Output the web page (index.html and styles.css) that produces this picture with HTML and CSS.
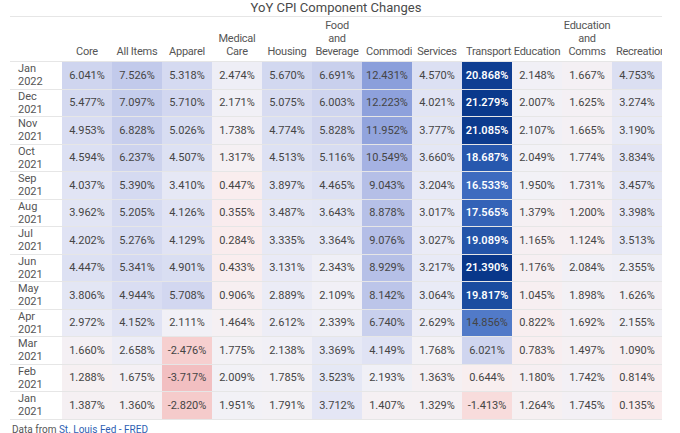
FILE: index.html
```html
<!DOCTYPE html>
<html lang="en">
<head>
<meta charset="utf-8">
<title>YoY CPI Component Changes</title>
<link rel="stylesheet" href="styles.css">
</head>
<body>
<div class="chart">
  <div class="title">YoY CPI Component Changes</div>
  <table class="grid">
    <colgroup>
      <col class="c-label">
      <col span="12" class="c-val">
    </colgroup>
    <thead>
      <tr>
        <th class="corner"></th>
        <th>Core</th>
        <th>All Items</th>
        <th>Apparel</th>
        <th>Medical<br>Care</th>
        <th>Housing</th>
        <th>Food<br>and<br>Beverage</th>
        <th class="clip">Commodities</th>
        <th>Services</th>
        <th class="clip">Transportation</th>
        <th>Education</th>
        <th>Education<br>and<br>Comms</th>
        <th class="clip">Recreation</th>
      </tr>
    </thead>
    <tbody>
      <tr><th class="lbl">Jan<br>2022</th><td>6.041%</td><td>7.526%</td><td>5.318%</td><td>2.474%</td><td>5.670%</td><td>6.691%</td><td>12.431%</td><td>4.570%</td><td>20.868%</td><td>2.148%</td><td>1.667%</td><td>4.753%</td></tr>
      <tr><th class="lbl">Dec<br>2021</th><td>5.477%</td><td>7.097%</td><td>5.710%</td><td>2.171%</td><td>5.075%</td><td>6.003%</td><td>12.223%</td><td>4.021%</td><td>21.279%</td><td>2.007%</td><td>1.625%</td><td>3.274%</td></tr>
      <tr><th class="lbl">Nov<br>2021</th><td>4.953%</td><td>6.828%</td><td>5.026%</td><td>1.738%</td><td>4.774%</td><td>5.828%</td><td>11.952%</td><td>3.777%</td><td>21.085%</td><td>2.107%</td><td>1.665%</td><td>3.190%</td></tr>
      <tr><th class="lbl">Oct<br>2021</th><td>4.594%</td><td>6.237%</td><td>4.507%</td><td>1.317%</td><td>4.513%</td><td>5.116%</td><td>10.549%</td><td>3.660%</td><td>18.687%</td><td>2.049%</td><td>1.774%</td><td>3.834%</td></tr>
      <tr><th class="lbl">Sep<br>2021</th><td>4.037%</td><td>5.390%</td><td>3.410%</td><td>0.447%</td><td>3.897%</td><td>4.465%</td><td>9.043%</td><td>3.204%</td><td>16.533%</td><td>1.950%</td><td>1.731%</td><td>3.457%</td></tr>
      <tr><th class="lbl">Aug<br>2021</th><td>3.962%</td><td>5.205%</td><td>4.126%</td><td>0.355%</td><td>3.487%</td><td>3.643%</td><td>8.878%</td><td>3.017%</td><td>17.565%</td><td>1.379%</td><td>1.200%</td><td>3.398%</td></tr>
      <tr><th class="lbl">Jul<br>2021</th><td>4.202%</td><td>5.276%</td><td>4.129%</td><td>0.284%</td><td>3.335%</td><td>3.364%</td><td>9.076%</td><td>3.027%</td><td>19.089%</td><td>1.165%</td><td>1.124%</td><td>3.513%</td></tr>
      <tr><th class="lbl">Jun<br>2021</th><td>4.447%</td><td>5.341%</td><td>4.901%</td><td>0.433%</td><td>3.131%</td><td>2.343%</td><td>8.929%</td><td>3.217%</td><td>21.390%</td><td>1.176%</td><td>2.084%</td><td>2.355%</td></tr>
      <tr><th class="lbl">May<br>2021</th><td>3.806%</td><td>4.944%</td><td>5.708%</td><td>0.906%</td><td>2.889%</td><td>2.109%</td><td>8.142%</td><td>3.064%</td><td>19.817%</td><td>1.045%</td><td>1.898%</td><td>1.626%</td></tr>
      <tr><th class="lbl">Apr<br>2021</th><td>2.972%</td><td>4.152%</td><td>2.111%</td><td>1.464%</td><td>2.612%</td><td>2.339%</td><td>6.740%</td><td>2.629%</td><td>14.856%</td><td>0.822%</td><td>1.692%</td><td>2.155%</td></tr>
      <tr><th class="lbl">Mar<br>2021</th><td>1.660%</td><td>2.658%</td><td>-2.476%</td><td>1.775%</td><td>2.138%</td><td>3.369%</td><td>4.149%</td><td>1.768%</td><td>6.021%</td><td>0.783%</td><td>1.497%</td><td>1.090%</td></tr>
      <tr><th class="lbl">Feb<br>2021</th><td>1.288%</td><td>1.675%</td><td>-3.717%</td><td>2.009%</td><td>1.785%</td><td>3.523%</td><td>2.193%</td><td>1.363%</td><td>0.644%</td><td>1.180%</td><td>1.742%</td><td>0.814%</td></tr>
      <tr><th class="lbl">Jan<br>2021</th><td>1.387%</td><td>1.360%</td><td>-2.820%</td><td>1.951%</td><td>1.791%</td><td>3.712%</td><td>1.407%</td><td>1.329%</td><td>-1.413%</td><td>1.264%</td><td>1.745%</td><td>0.135%</td></tr>
    </tbody>
  </table>
  <div class="source">Data from <a href="#">St. Louis Fed - FRED</a></div>
</div>
<script src="script.js"></script>
</body>
</html>
```

FILE: styles.css
```css
html, body {
  margin: 0;
  padding: 0;
  background: #ffffff;
}

body {
  font-family: Roboto, "Liberation Sans", Arial, sans-serif;
  color: #444444;
}

.chart {
  width: 652px;
  margin-left: 10px;
}

.title {
  height: 16px;
  line-height: 16px;
  font-size: 13px;
  color: #4a4a4a;
  text-align: center;
  border-bottom: 1px solid #e6e6e6;
  white-space: nowrap;
}

.grid {
  width: 652px;
  table-layout: fixed;
  border-collapse: separate;
  border-spacing: 0;
  font-size: 11px;
}

.c-label {
  width: 52px;
}

.c-val {
  width: 50px;
}

.grid thead tr {
  height: 45px;
}

.grid thead th {
  padding: 0 0 3px;
  line-height: 13px;
  font-weight: normal;
  letter-spacing: -0.25px;
  color: #555555;
  text-align: center;
  vertical-align: bottom;
  white-space: nowrap;
  overflow: hidden;
  border-bottom: 1px solid #e6e6e6;
}

.grid thead th.clip {
  text-align: left;
  padding-left: 4px;
}

.grid tbody tr {
  height: 27.5px;
}

.grid tbody th.lbl {
  padding: 0 0 0 8px;
  font-weight: normal;
  text-align: left;
  vertical-align: middle;
  line-height: 13px;
  color: #555555;
  border-bottom: 1px solid #e6e6e6;
}

.grid td {
  padding: 0;
  text-align: center;
  vertical-align: middle;
  line-height: 13px;
  white-space: nowrap;
  color: #454545;
  background-color: #f2f1f6;
  border-bottom: 1px solid #e6e6e6;
}

.grid td.dark {
  color: #ffffff;
  font-weight: 600;
}

.source {
  margin-top: 3px;
  padding-left: 2px;
  font-size: 10px;
  line-height: 13px;
  color: #555555;
  white-space: nowrap;
}

.source a {
  color: #2f5fb3;
  text-decoration: underline;
}
```

FILE: script.js
```js
(function () {
  var stops = [
    [-3.8, [242, 190, 192]],
    [-2.8, [245, 203, 203]],
    [-1.4, [248, 220, 220]],
    [0.0, [250, 235, 236]],
    [1.0, [247, 239, 241]],
    [2.0, [242, 241, 246]],
    [3.0, [234, 235, 246]],
    [4.5, [221, 225, 243]],
    [6.0, [207, 213, 239]],
    [7.5, [194, 202, 235]],
    [9.0, [181, 191, 231]],
    [10.5, [166, 179, 227]],
    [12.4, [140, 159, 219]],
    [14.9, [80, 121, 200]],
    [16.5, [62, 107, 191]],
    [18.7, [39, 88, 174]],
    [20.0, [24, 74, 158]],
    [21.4, [9, 55, 138]]
  ];

  function colorFor(v) {
    if (v <= stops[0][0]) return stops[0][1];
    var last = stops[stops.length - 1];
    if (v >= last[0]) return last[1];
    for (var i = 0; i < stops.length - 1; i++) {
      var a = stops[i], b = stops[i + 1];
      if (v >= a[0] && v <= b[0]) {
        var t = (v - a[0]) / (b[0] - a[0]);
        return [0, 1, 2].map(function (k) {
          return Math.round(a[1][k] + (b[1][k] - a[1][k]) * t);
        });
      }
    }
    return last[1];
  }

  var cells = document.querySelectorAll('.grid td');
  for (var i = 0; i < cells.length; i++) {
    var v = parseFloat(cells[i].textContent);
    if (isNaN(v)) continue;
    var c = colorFor(v);
    cells[i].style.backgroundColor = 'rgb(' + c.join(',') + ')';
    if (v > 15) cells[i].classList.add('dark');
  }
})();
```
